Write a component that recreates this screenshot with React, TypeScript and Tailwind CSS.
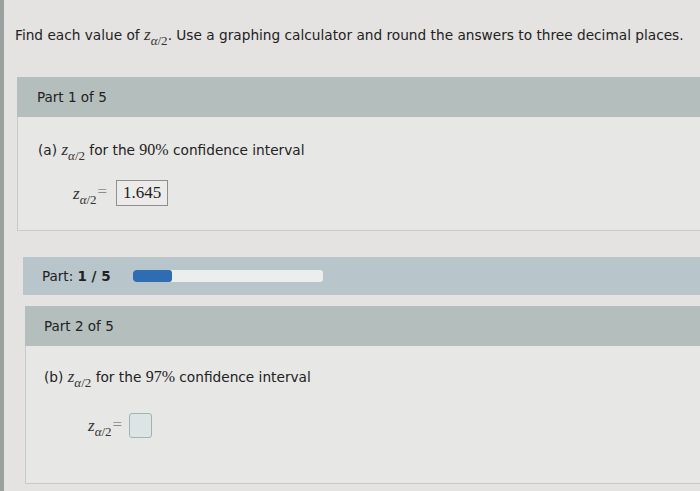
import type { ReactNode } from "react";

const sans = { fontFamily: '"DejaVu Sans", Verdana, sans-serif' };
const serif = { fontFamily: '"Liberation Serif", "Times New Roman", serif' };

function Z() {
  return (
    <span style={serif} className="whitespace-nowrap text-[17px] leading-none text-[#333]">
      <span className="italic">z</span>
      <span className="relative top-[5px] text-[13px]">
        <span className="italic">α</span>/2
      </span>
    </span>
  );
}

function Header({ children, className = "" }: { children: ReactNode; className?: string }) {
  return (
    <div className={`flex h-[40px] shrink-0 items-center bg-[#b4bebc] text-[13.5px] text-[#222] ${className}`}>
      {children}
    </div>
  );
}

function AnswerRow({ value, className = "" }: { value?: string; className?: string }) {
  return (
    <div className={`flex items-center ${className}`}>
      <Z />
      <span style={serif} className="ml-[1px] -mt-[3px] text-[17px] leading-none text-[#8a8d8d]">=</span>
      {value ? (
        <div
          style={serif}
          className="ml-[9px] flex h-[26px] w-[52px] items-center justify-center border border-[#8d8f8e] bg-[#ecebe9] text-[17px] text-[#222]"
        >
          {value}
        </div>
      ) : (
        <div className="ml-[7px] h-[25px] w-[23px] rounded-[3px] border border-[#9fb4b6] bg-[#dde5e4]" />
      )}
    </div>
  );
}

function Pct({ children }: { children: ReactNode }) {
  return (
    <span style={serif} className="text-[16px] leading-none">
      {children}
    </span>
  );
}

export default function App() {
  return (
    <div style={sans} className="flex h-[491px] w-[700px] flex-col overflow-hidden border-l-4 border-[#9ca1a0] bg-[#e4e3e1] text-[#222]">
      <div className="h-[77px] shrink-0 pl-[11px] pt-[24px]">
        <p className="text-[13.7px] leading-[22px]">
          Find each value of <Z />. Use a graphing calculator and round the answers to three decimal places.
        </p>
      </div>

      <Header className="ml-[13px] pl-[20px]">Part 1 of 5</Header>
      <div className="ml-[13px] h-[114px] shrink-0 border-b border-l border-[#c9c9c7] bg-[#e7e7e5] pl-[20px] pt-[22px]">
        <p className="text-[13.7px] leading-[22px]">
          (a) <Z /> for the <Pct>90%</Pct> confidence interval
        </p>
        <AnswerRow value="1.645" className="mt-[19px] ml-[35px]" />
      </div>

      <div className="mt-[26px] ml-[19px] flex h-[38px] shrink-0 items-center bg-[#b8c5cb] pl-[19px] text-[13.5px]">
        <span>
          Part: <b>1 / 5</b>
        </span>
        <div className="ml-[22px] h-[12px] w-[190px] overflow-hidden rounded-[3px] bg-[#eceeee]">
          <div className="h-full w-[39px] rounded-[3px] bg-[#2e6db1]" />
        </div>
      </div>

      <Header className="mt-[11px] ml-[21px] pl-[19px]">Part 2 of 5</Header>
      <div className="ml-[21px] h-[138px] shrink-0 border-b border-l border-[#c9c9c7] bg-[#e7e7e5] pl-[18px] pt-[20px]">
        <p className="text-[13.7px] leading-[22px]">
          (b) <Z /> for the <Pct>97%</Pct> confidence interval
        </p>
        <AnswerRow className="mt-[25px] ml-[44px]" />
      </div>
    </div>
  );
}
